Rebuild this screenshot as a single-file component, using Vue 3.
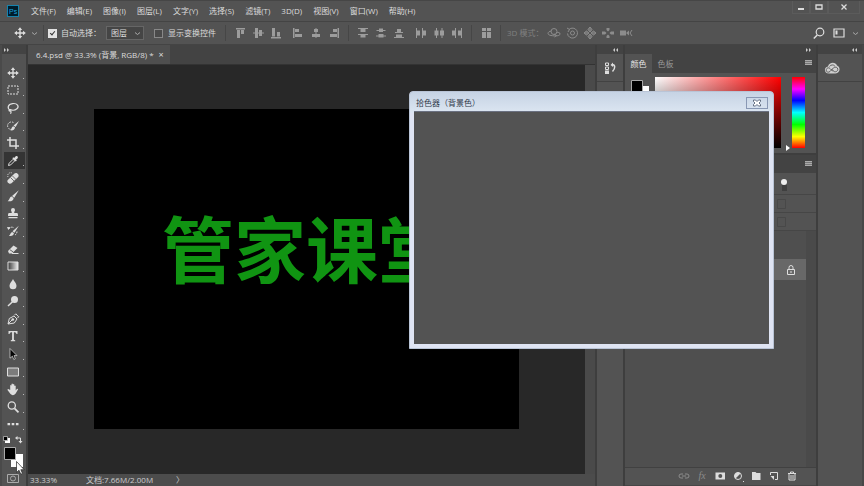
<script setup>
import { ref } from 'vue'

const menus = ['文件(F)', '编辑(E)', '图像(I)', '图层(L)', '文字(Y)', '选择(S)', '滤镜(T)', '3D(D)', '视图(V)', '窗口(W)', '帮助(H)']

const movePath = '<path d="M7 1.200 9.200 4H7.700v2.300H10V4.800L12.800 7 10 9.200V7.700H7.700V10h1.500L7 12.800 4.800 10h1.500V7.700H4v1.500L1.200 7 4 4.800v1.500h2.300V4H4.800z" fill="currentColor"/>'

const stroke = 'fill="none" stroke="currentColor"'
const tools = [
  { name: '移动', art: movePath },
  { name: '矩形选框', art: `<path d="M2 3h10v8H2z" ${stroke} stroke-dasharray="2 1"/>` },
  { name: '套索', art: `<path d="M4.2 9.2C1 7.600 1.600 3.200 6.500 2.600c5-.6 7 3 4.400 5.200C9 9.400 6 9.300 4.400 8.600c-1.600-.6-1.800 1.800-.3 1.600 1.400-.2 1 1.600.4 2.600" ${stroke} stroke-width="1.200"/>` },
  { name: '快速选择', art: `<path d="M6 10.500A3.800 3.800 0 1 1 8 4" ${stroke} stroke-dasharray="1.500 1"/><path d="M13 2 9.600 8 7.500 6.500zM9 8.300c0 2.500-2 3.500-4.800 3 1.500-.7 1.400-3.700 2.900-4z" fill="currentColor"/>` },
  { name: '裁剪', art: `<path d="M4 1v9h9M1 4h9v9" ${stroke} stroke-width="1.500"/>` },
  { name: '吸管', art: `<path d="m2.500 11.500.6-2.200 4-4 1.600 1.600-4 4z" ${stroke}/><path d="m6.300 4.200 1-1 .8.8 1.400-1.600c1.400-1.300 3.300.5 2 2L10 5.800l.8.8-1 1z" fill="currentColor"/>` },
  { name: '修复画笔', art: `<path d="M2 6a3 3 0 0 1 4-4" ${stroke} stroke-dasharray="1 1"/><path d="M1.800 9 8.500 2.500c2-1.800 5.300 1.300 3.700 3.500L5.500 12.300c-2.200 1.500-5.300-1.300-3.700-3.300z" fill="currentColor"/><path d="m4.500 6.500 4 4M6.300 4.800l4 4" fill="none" stroke="#555" stroke-width=".8"/>` },
  { name: '画笔', art: `<path d="M12.800 1.300 8.300 8.700 6 7zM7.600 9c0 2.800-2.700 3.800-6 3.200 2-.8 1.700-4.200 4-4.600z" fill="currentColor"/>` },
  { name: '仿制图章', art: `<path d="M5 4a2 2 0 1 1 4 0c0 1-.8 1.500-.8 3H11q1 0 1 2v1H2V9q0-2 1-2h2.800C5.800 5.500 5 5 5 4zM2.500 11h9v1.200h-9z" fill="currentColor"/>` },
  { name: '历史记录画笔', art: `<path d="M12.800 1.800 8.500 8.700 6.500 7.200zM7.900 9c0 2.500-2.400 3.500-5 2.800 1.500-.7 1.500-3.300 3.200-3.800zM1 3l3.500.2L2.300 6z" fill="currentColor"/><path d="M3 4.500C5 2.500 7 3 8 4M11 7.500c0 2-1 3-2 3.500" ${stroke} stroke-dasharray="1.500 1"/>` },
  { name: '橡皮擦', art: `<path d="m2 9 5.500-5.500L11.500 6 6 11.500H3z" fill="currentColor"/><path d="M4 7.800 7.300 10" fill="none" stroke="#666"/><path d="M6 11.500h6.500" ${stroke}/>` },
  { name: '渐变', art: `<defs><linearGradient id="tool-gradient"><stop stop-color="#3a3a3a"/><stop offset="1" stop-color="#eee"/></linearGradient></defs><path d="M2 3h10v8H2z" fill="url(#tool-gradient)" stroke="currentColor"/>` },
  { name: '模糊', art: `<path d="M7 2c1 2.500 3.500 4.200 3.500 6.700a3.500 3.500 0 0 1-7 0C3.500 6.200 6 4.500 7 2z" fill="currentColor"/>` },
  { name: '减淡', art: `<circle cx="8.500" cy="5.500" r="3.500" fill="currentColor"/><path d="M6.500 7.800 2 12" ${stroke} stroke-width="1.500"/>` },
  { name: '钢笔', art: `<path d="m2 12 1.300-5.500L8 4l3 3-2.700 4L2 12l4-4M8.300 3.300l1.500-1.500 2.900 3-1.400 1.400" ${stroke}/><circle cx="6.800" cy="7.500" r="1.300" fill="currentColor"/>` },
  { name: '横排文字', art: `<path d="M2.500 2h9v3h-1q-.2-1.700-1.700-1.700h-.9v7.200q0 .8 1.300.8v.9H4.800v-.9q1.300 0 1.300-.8V3.300h-.9Q3.700 3.300 3.500 5h-1z" fill="currentColor"/>` },
  { name: '路径选择', art: `<path d="M4 1.500v9.700l2.400-2 1.400 3.300 1.500-.7L8 8.600h3z" fill="#050505" stroke="currentColor" stroke-width=".7"/>` },
  { name: '矩形', art: `<path d="M1.500 3h11v8h-11z" fill="#7c7c7c" stroke="currentColor"/>` },
  { name: '抓手', art: `<path d="M4.200 8V3.500q.6-1 1.300 0V6V2q.7-1 1.400 0v4V2.500q.7-1 1.400 0v4V4q.7-1 1.400 0v4.500l1.300-1.700q1.200-.2 1 .8l-2.300 4Q7 14.500 4.500 12L1.500 8q0-1.200 1.200-.8z" fill="currentColor"/>` },
  { name: '缩放', art: `<circle cx="5.800" cy="5.500" r="3.600" ${stroke} stroke-width="1.300"/><path d="m8.500 8.300 4 4" ${stroke} stroke-width="1.800"/>` },
  { name: '更多', art: `<path d="M1.500 6h2.600v2.200H1.500zM5.700 6h2.600v2.200H5.700zM9.900 6h2.600v2.200H9.900z" fill="currentColor"/>` }
]
const activeTool = ref('吸管')

const alignGroups = [
  [
    { name: '顶对齐', art: '<path d="M3 2h9v1.500H3zM4 4h3v8H4zM8 4h3v4H8z" fill="currentColor"/>' },
    { name: '垂直居中对齐', art: '<path d="M4 2h3v10H4zM8 4h3v6H8zM2 6.500h11v1H2z" fill="currentColor"/>' },
    { name: '底对齐', art: '<path d="M2 11h10v1.500H2zM3 2h3v8.500H3zM8 6h3v4.500H8z" fill="currentColor"/>' }
  ],
  [
    { name: '左对齐', art: '<path d="M2 2h1.500v10H2zM4 3h4v3H4zM4 8h7v3H4z" fill="currentColor"/>' },
    { name: '水平居中对齐', art: '<path d="M6.500 2h1v10h-1zM5 3h4v3H5zM3 8h8v3H3z" fill="currentColor"/>' },
    { name: '右对齐', art: '<path d="M10.500 2H12v10h-1.500zM6 3h4v3H6zM3 8h7v3H3z" fill="currentColor"/>' }
  ],
  [
    { name: '按顶分布', art: '<path d="M2 2h10v1H2zM4.500 3h5v3h-5zM2 8h10v1H2zM4.500 9h5v2.500h-5z" fill="currentColor"/>' },
    { name: '垂直居中分布', art: '<path d="M2.500 4h9v1h-9zM5 2.500h4V6H5zM2 9.500h10v1H2zM4.500 8h5v3.500h-5z" fill="currentColor"/>' },
    { name: '按底分布', art: '<path d="M3 6h8v1H3zM5 3h4v3H5zM2 11h10v1H2zM4 8.500h6V11H4z" fill="currentColor"/>' }
  ],
  [
    { name: '按左分布', art: '<path d="M2 2h1v10H2zM3 4.500h3v5H3zM8 2h1v10H8zM9 4.500h3v5H9z" fill="currentColor"/>' },
    { name: '水平居中分布', art: '<path d="M4 2h1v10H4zM2.500 4.500h4v5h-4zM9.500 2h1v10h-1zM8 4.500h4v5H8z" fill="currentColor"/>' },
    { name: '按右分布', art: '<path d="M5 2h1v10H5zM2 4.500h3v5H2zM11 2h1v10h-1zM8 4.500h3v5H8z" fill="currentColor"/>' }
  ],
  [
    { name: '自动对齐', art: '<path d="M3 2h4v3H3zM8 2h4v3H8zM3 6h4v6H3zM8 6h4v6H8z" fill="currentColor"/>' }
  ]
]
const modes3d = [
  { name: '旋转', art: `<circle cx="7" cy="5.500" r="3" ${stroke}/><path d="M4.500 5C0 5.500 0 9 4 9.500c4.500.8 9 .5 9-1.500S11 6.500 9.500 6.500M7 8l2.500 1.500L7.500 11" ${stroke}/>` },
  { name: '滚动', art: `<circle cx="7.500" cy="7" r="2" ${stroke}/><path d="M4 3.500a5 5 0 1 1-1.500 4M2 2l2.500 1.500L3 6" ${stroke}/>` },
  { name: '拖动', art: `<path d="m7 1 2 2.500L7 6 5 3.500zM7 8l2 2.500L7 13l-2-2.500zM3.500 5 6 7 3.500 9 1 7zM10.500 5 13 7l-2.500 2L8 7z" fill="#777" stroke="currentColor"/>` },
  { name: '滑动', art: `<path d="M5.500 2h3v2L7 5.500 5.500 4zM5.500 12h3v-2L7 8.500 5.500 10zM1 5.500h3L5.500 7 4 8.500H1zM13 5.500h-3L8.500 7 10 8.500h3z" fill="currentColor"/>` },
  { name: '缩放相机', art: `<path d="M1 4.500h6v5H1zM7 7l3-2.500v5z" fill="currentColor"/><path d="m13 4-2 3 2 3" ${stroke}/>` }
]

const layerActions = [
  { name: '链接图层', dim: true, art: `<path d="M6 5H4a2 2 0 0 0 0 4h2M8 5h2a2 2 0 0 1 0 4H8M5 7h4" ${stroke}/>` },
  { name: '图层样式', dim: true, text: 'fx' },
  { name: '添加蒙版', art: '<path fill-rule="evenodd" d="M2.500 3.500h9.500v7H2.500zM7.300 5a2 2 0 1 0 0 4 2 2 0 0 0 0-4z" fill="currentColor"/>' },
  { name: '调整图层', art: `<circle cx="7" cy="7" r="3.500" ${stroke}/><path d="M4.500 9.500a3.500 3.500 0 0 1 5-5zM12 12h1v1h-1z" fill="currentColor"/>` },
  { name: '新建组', art: '<path d="M3 3h3.500l1 1H11.500v7H3z" fill="currentColor"/>' },
  { name: '新建图层', art: `<path d="M3.500 6V3.500h7v7H8" ${stroke}/><path d="M3.500 7H7v4z" fill="currentColor"/>` },
  { name: '删除图层', art: `<path d="M3 4.500h8M5.500 4V3h3v1M4 5v6h6V5M6 6v4M8 6v4" ${stroke}/>` }
]

const autoSelect = ref(true)
const showTransform = ref(false)
const target = ref('图层')
</script>

<template>
  <div class="app">
    <header class="menubar">
      <svg class="logo" viewBox="0 0 12 12" aria-label="Ps">
        <rect x=".5" y=".5" width="11" height="11" fill="#001d2b" stroke="#1583ad" />
        <text x="2" y="8.500" font-size="7" font-family="Liberation Sans, sans-serif" fill="#19a5e0">Ps</text>
      </svg>
      <nav class="menus">
        <button v-for="m in menus" :key="m" type="button">{{ m }}</button>
      </nav>
      <div class="window-controls">
        <button type="button" aria-label="最小化"><svg viewBox="0 0 14 14"><path d="M4 8h6v2H4z" fill="currentColor" /></svg></button>
        <button type="button" aria-label="最大化"><svg viewBox="0 0 14 14"><path d="M4 5h6v4H4z" fill="none" stroke="currentColor" stroke-width="1.300" /></svg></button>
        <button type="button" aria-label="关闭" class="wide"><svg viewBox="0 0 14 14"><path d="m4.500 4.500 5 5m0-5-5 5" stroke="currentColor" stroke-width="1.300" /></svg></button>
      </div>
    </header>

    <section class="options">
      <svg class="icon bright" viewBox="0 0 14 14" v-html="movePath"></svg>
      <svg class="chevron" viewBox="0 0 7 7"><path d="m1 2.500 2.500 2 2.500-2" fill="none" stroke="currentColor" /></svg>
      <i class="sep near"></i>
      <input id="auto" v-model="autoSelect" type="checkbox" />
      <label for="auto" class="auto">自动选择：</label>
      <span class="picker">
        <select v-model="target" aria-label="自动选择目标"><option>图层</option><option>组</option></select>
        <svg class="chevron" viewBox="0 0 7 7"><path d="m1 2.500 2.500 2 2.500-2" fill="none" stroke="currentColor" /></svg>
      </span>
      <input id="transform" v-model="showTransform" type="checkbox" />
      <label for="transform" class="transform">显示变换控件</label>
      <div class="align">
        <div v-for="(g, i) in alignGroups" :key="i" class="group" :class="{ ruled: i % 2 === 0 }">
          <button v-for="b in g" :key="b.name" type="button" :aria-label="b.name"><svg class="icon" viewBox="0 0 14 14" v-html="b.art"></svg></button>
        </div>
      </div>
      <span class="mode-label">3D 模式：</span>
      <div class="group modes">
        <button v-for="b in modes3d" :key="b.name" type="button" :aria-label="b.name"><svg class="icon" viewBox="0 0 14 14" v-html="b.art"></svg></button>
      </div>
      <div class="option-end">
        <button type="button" aria-label="搜索"><svg class="icon bright" viewBox="0 0 14 14"><circle cx="8" cy="6" r="3.800" fill="none" stroke="currentColor" stroke-width="1.200" /><path d="m5.300 9-3.500 3.500" stroke="currentColor" stroke-width="1.500" /></svg></button>
        <button type="button" aria-label="工作区"><svg class="icon bright" viewBox="0 0 14 14"><path d="M2 3h10v8H2z" fill="none" stroke="currentColor" stroke-width="1.200" /><path d="M3.500 4.500h2v4h-2z" fill="currentColor" /></svg></button>
        <svg class="chevron" viewBox="0 0 7 7"><path d="m1 2.500 2.500 2 2.500-2" fill="none" stroke="currentColor" /></svg>
      </div>
    </section>

    <main class="workspace">
      <aside class="tools">
        <div class="strip left"><svg class="arrows" viewBox="0 0 7 6"><path d="M1 1v4l2-2zM4 1v4l2-2z" fill="currentColor" /></svg></div>
        <div class="tool-list">
          <button v-for="t in tools" :key="t.name" type="button" class="tool" :class="{ active: t.name === activeTool }" :aria-label="t.name" @click="activeTool = t.name">
            <svg class="icon bright" viewBox="0 0 14 14" v-html="t.art"></svg>
          </button>
        </div>
        <svg class="swatches" viewBox="0 0 24 53" aria-label="前景色和背景色">
          <path d="M3 5h5v5H3z" fill="#fff" /><path d="M1.500 3.500h4v4h-4z" fill="#000" stroke="#ccc" stroke-width=".7" />
          <path d="M15 5h3.500v4" fill="none" stroke="#ddd" /><path d="m13 5 2.500-2v4zM16.500 8h4l-2 2.500z" fill="#ddd" />
          <path d="M9 21h12v13H9z" fill="#fff" />
          <path d="M2.500 14.500h11v12h-11z" fill="#000" stroke="#aaa" />
          <path d="M5.500 41.500h11v8h-11z" fill="none" stroke="#aaa" /><circle cx="11" cy="45.500" r="2.500" fill="none" stroke="#aaa" />
        </svg>
      </aside>

      <section class="document">
        <div class="tabs">
          <div class="tab">6.4.psd @ 33.3% (背景, RGB/8) *<button type="button" aria-label="关闭文档">×</button></div>
        </div>
        <div class="stage">
          <div class="view"><div class="artboard">管家课堂</div></div>
          <div class="scroll"></div>
        </div>
        <footer class="status">
          <span class="zoom">33.33%</span><span class="size">文档:7.66M/2.00M</span><span class="more">〉</span>
        </footer>
      </section>

      <aside class="history">
        <div class="strip"><svg class="arrows" viewBox="0 0 7 6"><path d="M3 1v4L1 3zM6 1v4L4 3z" fill="currentColor" /></svg></div>
        <button type="button" class="dock" aria-label="历史记录">
          <svg class="icon bright" viewBox="0 0 14 14"><path d="M2.500 2h3v2.500h-3zM2.500 6h3v2.500h-3z" fill="none" stroke="currentColor" /><path d="M2 9.500h4V13H2zM7.500 4 10 1.500V6z" fill="currentColor" /><path d="M9 3.500c3.500 0 3.500 4 .5 7" fill="none" stroke="currentColor" stroke-width="1.500" /></svg>
        </button>
      </aside>

      <aside class="panels">
        <div class="strip"><svg class="arrows" viewBox="0 0 7 6"><path d="M1 1v4l2-2zM4 1v4l2-2z" fill="currentColor" /></svg></div>
        <div class="panel-tabs">
          <button type="button" class="on">颜色</button><button type="button">色板</button>
          <i class="panel-menu"></i>
        </div>
        <div class="color">
          <svg class="fgbg" viewBox="0 0 22 24"><path d="M12 9h7v12h-7z" fill="#fff" /><path d="M1.500 3.500h11v12h-11z" fill="#000" stroke="#aaa" /></svg>
          <div class="spectrum"></div>
          <svg class="pointer" viewBox="0 0 6 8"><path d="M1 1v6l4-3z" fill="#fff" /></svg>
          <div class="hue"></div>
        </div>
        <div class="panel-tabs layers-head"><i class="panel-menu"></i></div>
        <div class="layer-row filter"><svg viewBox="0 0 14 18"><path d="M5 10h5v6H5z" fill="#3f3f3f" /><circle cx="7" cy="7" r="3" fill="#eee" /></svg></div>
        <div class="layer-row"><svg viewBox="0 0 14 18"><path d="M.5 4.500h8v9h-8z" fill="none" stroke="#484848" /></svg></div>
        <div class="layer-row"><svg viewBox="0 0 14 18"><path d="M.5 4.500h8v9h-8z" fill="none" stroke="#484848" /></svg></div>
        <div class="layers">
          <div class="layer"><svg class="icon bright" viewBox="0 0 14 14"><path d="M3.500 6.500h7v5h-7zM5 6V4.500a2 2 0 0 1 4 0V6M7 8v2" fill="none" stroke="currentColor" /></svg></div>
        </div>
        <div class="layer-actions">
          <button v-for="a in layerActions" :key="a.name" type="button" :class="{ dim: a.dim }" :aria-label="a.name">
            <em v-if="a.text">{{ a.text }}</em>
            <svg v-else class="icon" viewBox="0 0 14 14" v-html="a.art"></svg>
          </button>
        </div>
      </aside>

      <aside class="cloud">
        <div class="strip"><svg class="arrows" viewBox="0 0 7 6"><path d="M3 1v4L1 3zM6 1v4L4 3z" fill="currentColor" /></svg></div>
        <button type="button" class="dock" aria-label="Creative Cloud">
          <svg class="cc" viewBox="0 0 16 14"><path d="M5 12.500C-.3 12.500-.3 6 4 5.500 5 1 11.500.5 13 4.500c4 1.500 3.200 8-1.500 8z" fill="#cfcfcf" /><path d="M9 10.500 6 7.500C4.500 6 2.200 7.200 2.200 9.200s2.500 2.600 3.800 1.300l3.500-3.700c1.500-1.400 4.300-.7 4.300 1.500s-2.800 3.300-4.300 1.700L7.500 8M5.500 5.500C7 3.500 9.500 3.500 10.800 5" fill="none" stroke="#555" stroke-width=".9" /></svg>
        </button>
      </aside>
    </main>

    <div class="dialog" role="dialog" aria-labelledby="dialog-title">
      <div class="dialog-bar">
        <span id="dialog-title">拾色器（背景色）</span>
        <button type="button" aria-label="关闭"><svg viewBox="0 0 10 8"><path d="M1.500 1h2L5 2.500 6.500 1h2v1.500L7 4l1.500 1.500V7h-2L5 5.500 3.500 7h-2V5.500L3 4 1.500 2.500z" fill="#fff" stroke="#46536a" stroke-width=".8" /></svg></button>
      </div>
      <div class="dialog-body"></div>
    </div>

    <svg class="cursor" viewBox="0 0 9 14"><path d="M.5.500v11l2.500-2.300 1.800 4 1.700-.8-1.700-3.700h3.400z" fill="#fff" stroke="#222" stroke-width=".7" /></svg>
  </div>
</template>

<style>
body { background: #535353; }
</style>

<style scoped>
.app {
  position: relative;
  display: flex;
  flex-direction: column;
  height: 100vh;
  overflow: hidden;
  background: #535353;
  color: #dcdcdc;
  font: 8px/12px "Open Sans", "Noto Sans CJK SC", sans-serif;
}
.app * { box-sizing: border-box; }
button {
  display: flex;
  align-items: center;
  justify-content: center;
  padding: 0;
  border: 0;
  background: none;
  color: inherit;
  font: inherit;
  white-space: nowrap;
}
svg { display: block; flex: none; }
.icon { width: 14px; height: 14px; }
.bright { color: #dedede; }
.chevron { width: 7px; height: 7px; color: #aaa; }

.menubar {
  display: flex;
  align-items: center;
  flex: none;
  height: 22px;
  padding-left: 7px;
  border-top: 1px solid #464646;
  border-bottom: 1px solid #444;
}
.logo { width: 12px; height: 12px; }
.menus { display: flex; gap: 11px; margin-left: 12px; }
.window-controls { display: flex; align-self: flex-start; margin: 0 4px 0 auto; }
.window-controls button { width: 18px; height: 13px; border: 1px solid #5b5b5b; border-top: 0; }
.window-controls .wide { width: 32px; }
.window-controls svg { width: 14px; height: 14px; }

.options {
  display: flex;
  align-items: center;
  flex: none;
  height: 23px;
  padding: 0 5px 0 13px;
  border-bottom: 1px solid #444;
  white-space: nowrap;
}
.options > .chevron { margin-left: 4px; }
.sep { width: 1px; height: 16px; background: #464646; }
.near { margin-left: 5px; }
input[type="checkbox"] {
  appearance: none;
  position: relative;
  flex: none;
  width: 9px;
  height: 9px;
  margin: 0 0 0 4px;
  border: 1px solid #888;
  background: #4a4a4a;
}
input[type="checkbox"]:checked { background: #e2e2e2; border-color: #e2e2e2; }
input[type="checkbox"]:checked::after {
  content: "";
  position: absolute;
  left: 2px;
  top: 0;
  width: 2px;
  height: 4px;
  border: solid #333;
  border-width: 0 1px 1px 0;
  transform: rotate(40deg);
}
.auto { width: 45px; margin-left: 4px; }
.picker { display: flex; align-items: center; width: 38px; height: 14px; margin-right: 6px; border: 1px solid #666; background: #454545; }
.picker select { appearance: none; flex: 1; min-width: 0; padding: 0 0 0 4px; border: 0; background: none; color: inherit; font: inherit; }
.picker .chevron { margin-right: 2px; }
.transform { margin-left: 5px; }
.align { display: flex; margin-left: 9px; color: #9c9c9c; }
.group { display: flex; gap: 4px; padding: 1px 0 1px 8px; }
.group.ruled { padding-left: 7px; border-left: 1px solid #464646; }
.group:nth-child(even) { padding-right: 7px; }
.group:last-child { padding-right: 7px; border-right: 1px solid #464646; }
.mode-label { margin-left: 6px; color: #808080; }
.group.modes { padding: 0; border: 0; color: #8c8c8c; margin-left: 4px; }
.option-end { display: flex; align-items: center; gap: 6px; margin-left: auto; }

.workspace {
  display: grid;
  grid-template-columns: 28px minmax(0, 1fr) 28px 193px 48px;
  flex: 1;
  min-height: 0;
}
.workspace > * { display: flex; flex-direction: column; min-width: 0; min-height: 0; }
.strip { display: flex; align-items: center; justify-content: flex-end; flex: none; height: 9px; padding-right: 4px; background: #434343; color: #ccc; }
.strip.left { justify-content: flex-start; padding-left: 1px; }
.arrows { width: 7px; height: 6px; }

.tools { border-right: 2px solid #3c3c3c; border-left: 2px solid #4a4a4a; }
.tool-list { display: flex; flex-direction: column; flex: 1; padding-top: 10px; }
.tool { position: relative; flex: 1; min-height: 0; margin: 0 1px 0 2px; }
.tool .icon { margin-right: 3px; }
.tool.active { background: #343434; }
.tool::after { content: ""; position: absolute; right: 1px; bottom: 3px; width: 1px; height: 1px; background: #bbb; }
.swatches { width: 24px; height: 53px; }

.tabs { display: flex; flex: none; height: 20px; background: #434343; border-bottom: 1px solid #333; }
.tab { display: flex; align-items: center; padding: 0 6px 0 8px; background: #4f4f4f; white-space: nowrap; }
.tab button { margin-left: 5px; font-size: 9px; }
.stage { display: flex; flex: 1; min-height: 0; }
.view { display: flex; flex: 1; min-width: 0; padding: 44px 66px 45px; background: #282828; }
.artboard {
  flex: 1;
  min-width: 0;
  padding: 84px 0 0 68px;
  overflow: hidden;
  background: #000;
  color: #109412;
  font: bold 72px/106px "Noto Sans CJK SC", sans-serif;
  white-space: nowrap;
}
.scroll { width: 10px; background: #4a4a4a; }
.status { display: flex; align-items: center; flex: none; height: 12px; padding-left: 2px; background: #4c4c4c; color: #ccc; }
.size { margin-left: 29px; }
.more { margin-left: 23px; }

.history, .panels, .cloud { border-left: 2px solid #3e3e3e; }
.dock { flex: none; height: 28px; border-bottom: 1px solid #424242; }
.cc { width: 16px; height: 14px; margin-right: 17px; }
.cloud { border-right: 2px solid #474747; }

.panel-tabs { display: flex; align-items: stretch; flex: none; height: 19px; background: #434343; color: #999; }
.panel-tabs button { width: 27px; }
.panel-tabs .on { background: #535353; color: #e6e6e6; }
.panel-menu { width: 7px; height: 5px; margin: 6px 4px 0 auto; border: solid #aaa; border-width: 1px 0; background: linear-gradient(#777 1px, #aaa 1px, #aaa 2px, #777 2px); }
.color { display: flex; flex: none; height: 80px; padding: 4px 11px 5px 5px; }
.fgbg { width: 22px; height: 24px; margin-right: 3px; }
.spectrum { flex: 1; background: linear-gradient(transparent, #000), linear-gradient(90deg, #fff, #f00); }
.pointer { align-self: flex-end; width: 6px; height: 8px; margin: 0 1px -4px 4px; }
.hue { width: 13px; background: linear-gradient(#f00, #f0f 17%, #00f 33%, #0ff 50%, #0f0 67%, #ff0 84%, #f00); }
.layers-head { border-top: 2px solid #3e3e3e; height: 20px; }
.layer-row { display: flex; align-items: center; justify-content: flex-end; flex: none; height: 18px; padding-right: 25px; border-bottom: 1px solid #464646; }
.layer-row svg { width: 14px; height: 18px; }
.layer-row.filter { height: 22px; }
.layers { flex: 1; min-height: 0; padding-top: 28px; border-right: 10px solid #4a4a4a; background: #4f4f4f; }
.layer { display: flex; align-items: center; justify-content: flex-end; height: 21px; padding-right: 8px; background: #686868; }
.layer-actions { display: flex; align-items: center; justify-content: flex-end; gap: 4px; flex: none; height: 19px; padding: 0 17px 2px 0; border-top: 1px solid #414141; border-bottom: 1px solid #464646; color: #ddd; }
.layer-actions button { width: 14px; }
.layer-actions .dim { color: #8c8c8c; }
.layer-actions em { font: italic 10px/12px "Liberation Serif", serif; }

.dialog {
  position: absolute;
  top: 91px;
  left: 409px;
  right: 90px;
  bottom: 137px;
  display: flex;
  flex-direction: column;
  padding: 0 4px 4px;
  border: 1px solid #b9c4d6;
  border-radius: 4px 4px 0 0;
  background: #dfe4f3;
  background-image: linear-gradient(#c6d3e4, #dbe5f1 20px, #dfe4f3 21px);
}
.dialog-bar { display: flex; align-items: center; justify-content: space-between; flex: none; height: 19px; padding: 3px 1px 0 2px; color: #30394a; }
.dialog-bar button { width: 22px; height: 12px; border: 1px solid #8998b4; }
.dialog-bar svg { width: 10px; height: 8px; }
.dialog-body { flex: 1; background: #535353; border: solid #6a7080; border-width: 1px 0 0; }
.cursor { position: absolute; left: 16px; bottom: 11px; width: 9px; height: 14px; }
</style>
